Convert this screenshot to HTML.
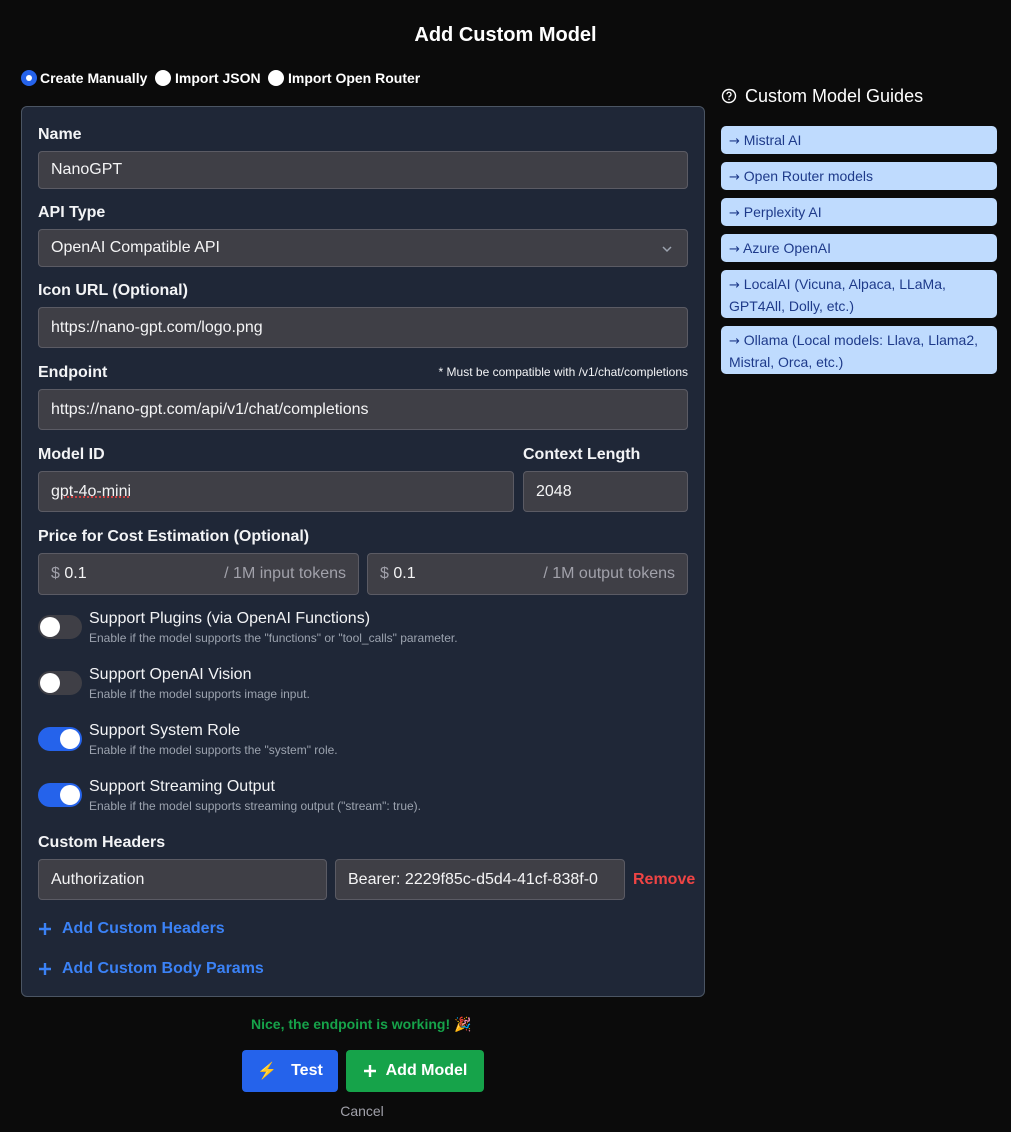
<!DOCTYPE html>
<html><head><meta charset="utf-8"><style>
*{box-sizing:border-box;margin:0;padding:0}
body{width:1011px;height:1132px;background:#0b0b0b;font-family:"Liberation Sans",sans-serif;color:#fff;position:relative;overflow:hidden}
.a{position:absolute}
.lab{position:absolute;left:38px;font-weight:bold;font-size:16px;color:#f3f4f6}
.inp{position:absolute;background:#3f3f46;border:1px solid #5b5b64;border-radius:4px;font-size:16px;color:#f4f4f5;padding-left:12px;display:flex;align-items:center}
.tg{position:absolute;left:38px;width:44px;height:24px;border-radius:12px;background:#3f3f46}
.tg i{position:absolute;top:2px;width:20px;height:20px;border-radius:50%;background:#fff}
.tt{position:absolute;left:89px;font-size:16px;color:#f3f4f6}
.ts{position:absolute;left:89px;font-size:12px;color:#9ca3af}
.lk{position:absolute;left:721px;width:276px;background:#bfdbfe;border-radius:5px;color:#1e3a8a;font-size:14px;line-height:20px;padding:4px 8px}
.ar{font-family:"DejaVu Sans",sans-serif;font-size:13px}
</style></head><body>
<div class="a" style="left:0;width:1011px;top:24px;text-align:center;font-size:20px;font-weight:bold">Add Custom Model</div>
<div class="a" style="left:21px;top:70px;width:16px;height:16px;border-radius:50%;background:#2563eb"><div class="a" style="left:5px;top:5px;width:6px;height:6px;border-radius:50%;background:#fff"></div></div>
<div class="a" style="left:40px;top:70px;font-size:14px;font-weight:bold">Create Manually</div>
<div class="a" style="left:155px;top:70px;width:16px;height:16px;border-radius:50%;background:#fff"></div>
<div class="a" style="left:175px;top:70px;font-size:14px;font-weight:bold">Import JSON</div>
<div class="a" style="left:268px;top:70px;width:16px;height:16px;border-radius:50%;background:#fff"></div>
<div class="a" style="left:288px;top:70px;font-size:14px;font-weight:bold">Import Open Router</div>

<div class="a" style="left:21px;top:106px;width:684px;height:891px;background:#1f2737;border:1px solid #4b5563;border-radius:6px"></div>
<div class="lab" style="top:126px">Name</div>
<div class="inp" style="left:38px;top:151px;width:650px;height:38px">NanoGPT</div>
<div class="lab" style="top:204px">API Type</div>
<div class="inp" style="left:38px;top:229px;width:650px;height:38px">OpenAI Compatible API<svg class="a" style="right:14px;top:13px" width="12" height="12" viewBox="0 0 12 12"><path d="M2 4l4 4 4-4" stroke="#9ca3af" stroke-width="1.5" fill="none"/></svg></div>
<div class="lab" style="top:282px">Icon URL (Optional)</div>
<div class="inp" style="left:38px;top:307px;width:650px;height:41px">https://nano-gpt.com/logo.png</div>
<div class="lab" style="top:364px">Endpoint</div>
<div class="a" style="right:323px;top:365px;font-size:12px;color:#f3f4f6">* Must be compatible with /v1/chat/completions</div>
<div class="inp" style="left:38px;top:389px;width:650px;height:41px">https://nano-gpt.com/api/v1/chat/completions</div>
<div class="lab" style="top:446px">Model ID</div>
<div class="lab" style="top:446px;left:523px">Context Length</div>
<div class="inp" style="left:38px;top:471px;width:476px;height:41px"><span style="text-decoration:underline dotted #ef4444">gpt-4o-mini</span></div>
<div class="inp" style="left:523px;top:471px;width:165px;height:41px">2048</div>
<div class="lab" style="top:528px">Price for Cost Estimation (Optional)</div>
<div class="inp" style="left:38px;top:553px;width:321px;height:42px"><span style="color:#a1a1aa">$</span>&nbsp;0.1<span style="position:absolute;right:12px;color:#a1a1aa">/ 1M input tokens</span></div>
<div class="inp" style="left:367px;top:553px;width:321px;height:42px"><span style="color:#a1a1aa">$</span>&nbsp;0.1<span style="position:absolute;right:12px;color:#a1a1aa">/ 1M output tokens</span></div>

<div class="tg" style="top:615px"><i style="left:2px"></i></div>
<div class="tt" style="top:610px">Support Plugins (via OpenAI Functions)</div>
<div class="ts" style="top:631px">Enable if the model supports the "functions" or "tool_calls" parameter.</div>
<div class="tg" style="top:671px"><i style="left:2px"></i></div>
<div class="tt" style="top:666px">Support OpenAI Vision</div>
<div class="ts" style="top:687px">Enable if the model supports image input.</div>
<div class="tg" style="top:727px;background:#2563eb"><i style="left:22px"></i></div>
<div class="tt" style="top:722px">Support System Role</div>
<div class="ts" style="top:743px">Enable if the model supports the "system" role.</div>
<div class="tg" style="top:783px;background:#2563eb"><i style="left:22px"></i></div>
<div class="tt" style="top:778px">Support Streaming Output</div>
<div class="ts" style="top:799px">Enable if the model supports streaming output ("stream": true).</div>

<div class="lab" style="top:834px">Custom Headers</div>
<div class="inp" style="left:38px;top:859px;width:289px;height:41px">Authorization</div>
<div class="inp" style="left:335px;top:859px;width:290px;height:41px;overflow:hidden;white-space:nowrap">Bearer: 2229f85c-d5d4-41cf-838f-0</div>
<div class="a" style="left:633px;top:871px;font-size:16px;font-weight:bold;color:#ef4444">Remove</div>
<svg class="a" style="left:38px;top:922px" width="14" height="14" viewBox="0 0 14 14"><path d="M7 1v12M1 7h12" stroke="#3b82f6" stroke-width="2.4"/></svg>
<div class="a" style="left:62px;top:920px;font-size:16px;font-weight:bold;color:#3b82f6">Add Custom Headers</div>
<svg class="a" style="left:38px;top:962px" width="14" height="14" viewBox="0 0 14 14"><path d="M7 1v12M1 7h12" stroke="#3b82f6" stroke-width="2.4"/></svg>
<div class="a" style="left:62px;top:960px;font-size:16px;font-weight:bold;color:#3b82f6">Add Custom Body Params</div>

<div class="a" style="left:251px;top:1016px;font-size:14px;font-weight:bold;color:#16a34a">Nice, the endpoint is working! 🎉</div>
<div class="a" style="left:242px;top:1050px;width:96px;height:42px;background:#2563eb;border-radius:4px;font-size:16px;font-weight:bold;display:flex;align-items:center;justify-content:center"><span style="color:#fbbf24;margin-right:14px">⚡</span>Test</div>
<div class="a" style="left:346px;top:1050px;width:138px;height:42px;background:#16a34a;border-radius:4px;font-size:16px;font-weight:bold;display:flex;align-items:center;justify-content:center"><svg width="14" height="14" viewBox="0 0 14 14" style="margin-right:9px"><path d="M7 1v12M1 7h12" stroke="#fff" stroke-width="2.4"/></svg>Add Model</div>
<div class="a" style="left:0;width:724px;top:1103px;text-align:center;font-size:14px;color:#a1a1aa">Cancel</div>

<svg class="a" style="left:721px;top:88px" width="16" height="16" viewBox="0 0 16 16"><circle cx="8" cy="8" r="6.5" stroke="#fff" stroke-width="1.4" fill="none"/><path d="M6 6.3a2 2 0 1 1 2.5 1.9c-.4.2-.5.5-.5.9v.4" stroke="#fff" stroke-width="1.3" fill="none"/><circle cx="8" cy="11.3" r=".8" fill="#fff"/></svg>
<div class="a" style="left:745px;top:86px;font-size:18px">Custom Model Guides</div>
<div class="lk" style="top:126px;height:28px"><span class="ar">→</span> Mistral AI</div>
<div class="lk" style="top:162px;height:28px"><span class="ar">→</span> Open Router models</div>
<div class="lk" style="top:198px;height:28px"><span class="ar">→</span> Perplexity AI</div>
<div class="lk" style="top:234px;height:28px"><span class="ar">→</span> Azure OpenAI</div>
<div class="lk" style="top:270px;height:48px"><span class="ar">→</span> LocalAI (Vicuna, Alpaca, LLaMa, GPT4All, Dolly, etc.)</div>
<div class="lk" style="top:326px;height:48px"><span class="ar">→</span> Ollama (Local models: Llava, Llama2, Mistral, Orca, etc.)</div>
</body></html>
